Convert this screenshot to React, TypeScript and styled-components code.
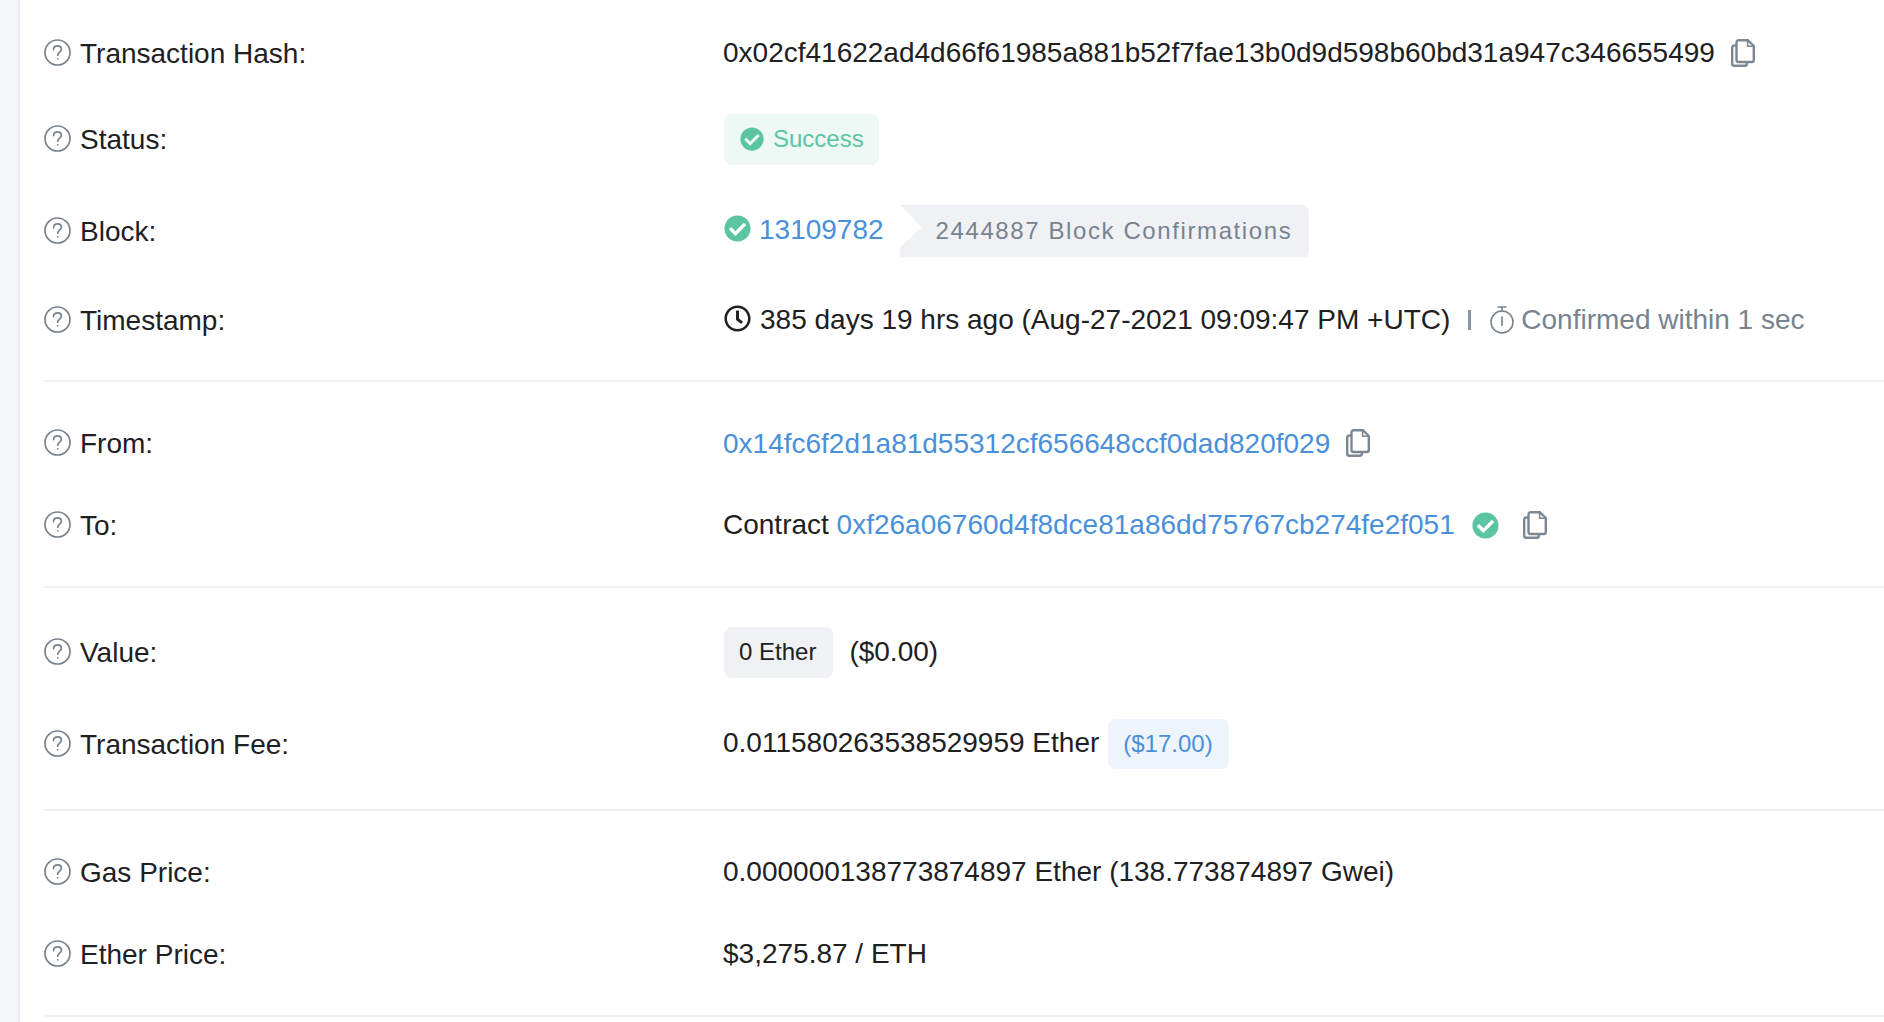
import * as React from 'react';
import styled, { createGlobalStyle } from 'styled-components';
import { FaCheckCircle, FaRegClock } from 'react-icons/fa';

const GlobalStyle = createGlobalStyle`
  html, body {
    margin: 0;
    padding: 0;
    background: #fff;
  }
  body {
    font-family: "Liberation Sans", Arial, sans-serif;
    font-size: 28px;
    color: #1e2022;
    -webkit-font-smoothing: antialiased;
  }
`;

const Page = styled.div`
  width: 1884px;
  height: 1022px;
  overflow: hidden;
  background: #f5f6f9;
  padding-left: 18px;
  box-sizing: border-box;
`;

const Card = styled.div`
  height: 100%;
  background: #fff;
  border-left: 2px solid #e7eaf3;
  padding-left: 24px;
`;

const Section = styled.section<{ $top: number; $bottom: number }>`
  padding: ${p => p.$top}px 0 ${p => p.$bottom}px;
  border-bottom: 2px solid #eef0f5;
`;

const Row = styled.div<{ $height: number }>`
  display: grid;
  grid-template-columns: 679px 1fr;
  align-items: center;
  height: ${p => p.$height}px;
`;

const Label = styled.div`
  display: flex;
  align-items: center;
  gap: 9px;

  svg {
    margin-bottom: 1px;
  }
`;

const LabelText = styled.span`
  padding-top: 2px;
`;

const Value = styled.div`
  display: flex;
  align-items: center;
  white-space: nowrap;
`;

const Link = styled.a<{ $lift?: number }>`
  color: #4a90d9;
  text-decoration: none;
  margin-bottom: ${p => p.$lift ?? 0}px;
`;

const SuccessBadge = styled.span`
  display: inline-flex;
  align-items: center;
  gap: 9px;
  height: 51px;
  margin-left: 1px;
  padding: 0 15px 0 16px;
  border-radius: 8px;
  background: #eef8f5;
  color: #5bc5a3;
  font-size: 24px;
`;

const Confirmations = styled.span`
  display: inline-flex;
  align-items: center;
  height: 53px;
  margin-left: 16px;
  padding: 0 17px 0 36px;
  border-radius: 0 6px 6px 0;
  background: #f0f1f4;
  color: #77838f;
  font-size: 24px;
  letter-spacing: 1.6px;
  clip-path: polygon(0 0, 100% 0, 100% 100%, 0 100%, 0 43px, 22px 23px);
`;

const Muted = styled.span`
  color: #77838f;
`;

const Separator = styled.span`
  width: 3px;
  height: 20px;
  margin: 0 19px 0 18px;
  background: #8b95a1;
`;

const EtherBadge = styled.span`
  display: inline-flex;
  align-items: center;
  height: 51px;
  margin: 0 16px 0 1px;
  padding: 0 17px 0 15px;
  border-radius: 8px;
  background: #f0f1f4;
  font-size: 24px;
`;

const FeeAmount = styled.span`
  margin-bottom: 2px;
`;

const FeeBadge = styled.span`
  display: inline-flex;
  align-items: center;
  height: 50px;
  padding: 0 16px 0 15px;
  margin-left: 9px;
  border-radius: 8px;
  background: #edf4fc;
  color: #4a90d9;
  font-size: 24px;
`;

const Green = styled.span<{ $size: number; $left?: number; $right?: number; $lift?: number }>`
  display: inline-flex;
  color: #5bc5a3;
  font-size: ${p => p.$size}px;
  margin-left: ${p => p.$left ?? 0}px;
  margin-right: ${p => p.$right ?? 0}px;
  margin-bottom: ${p => p.$lift ?? 0}px;
`;

const ClockWrap = styled.span`
  display: inline-flex;
  font-size: 27px;
  margin: 0 9px 3px 1px;
`;

const CopyButton = styled.span<{ $left: number }>`
  display: inline-flex;
  margin-left: ${p => p.$left}px;
  color: #7c8794;
`;

const StopwatchWrap = styled.span`
  display: inline-flex;
  margin-right: 7px;
`;

function HelpIcon() {
  return (
    <svg width="27" height="27" viewBox="0 0 27 27" fill="none" stroke="#77838f" strokeWidth="1.7">
      <circle cx="13.5" cy="13.5" r="12.5" />
      <path d="M9.6 10.6c0-2.3 1.7-3.7 3.9-3.7s3.9 1.4 3.9 3.4c0 2.7-3.7 2.9-3.7 5.9" strokeLinecap="round" />
      <circle cx="13.7" cy="19.8" r="0.9" fill="#77838f" stroke="none" />
    </svg>
  );
}

function CopyIcon() {
  return (
    <svg width="24" height="28" viewBox="0 0 24 28" fill="none" stroke="currentColor" strokeWidth="2.4" strokeLinejoin="round">
      <path d="M5.5 6.5H3.2A2 2 0 0 0 1.2 8.5v16.3a2 2 0 0 0 2 2h10.6a2 2 0 0 0 2-2V23" />
      <path d="M7.5 1.2h9.3l6 5.8v14a2 2 0 0 1-2 2H7.5a2 2 0 0 1-2-2V3.2a2 2 0 0 1 2-2z" />
      <path d="M16.6 1.4v5.8h6" strokeWidth="1.6" />
    </svg>
  );
}

function StopwatchIcon() {
  return (
    <svg width="24" height="28" viewBox="0 0 24 28" fill="none" stroke="#77838f" strokeWidth="1.6">
      <circle cx="12" cy="16" r="11" />
      <path d="M8 1h8M12 1v4M12 11v8.5" strokeLinecap="round" />
    </svg>
  );
}

type FieldProps = {
  label: string;
  height: number;
  children: React.ReactNode;
};

function Field({ label, height, children }: FieldProps) {
  return (
    <Row $height={height}>
      <Label>
        <HelpIcon />
        <LabelText>{label}</LabelText>
      </Label>
      <Value>{children}</Value>
    </Row>
  );
}

export default function App() {
  return (
    <Page>
      <GlobalStyle />
      <Card>
        <Section $top={12} $bottom={18}>
          <Field label="Transaction Hash:" height={82}>
            0x02cf41622ad4d66f61985a881b52f7fae13b0d9d598b60bd31a947c346655499
            <CopyButton $left={16}><CopyIcon /></CopyButton>
          </Field>
          <Field label="Status:" height={90}>
            <SuccessBadge>
              <Green $size={24}><FaCheckCircle /></Green>
              Success
            </SuccessBadge>
          </Field>
          <Field label="Block:" height={94}>
            <Green $size={27} $left={1} $right={8} $lift={5}><FaCheckCircle /></Green>
            <Link $lift={3}>13109782</Link>
            <Confirmations>2444887 Block Confirmations</Confirmations>
          </Field>
          <Field label="Timestamp:" height={84}>
            <ClockWrap><FaRegClock /></ClockWrap>
            385 days 19 hrs ago (Aug-27-2021 09:09:47 PM +UTC)
            <Separator />
            <StopwatchWrap><StopwatchIcon /></StopwatchWrap>
            <Muted>Confirmed within 1 sec</Muted>
          </Field>
        </Section>
        <Section $top={20} $bottom={20}>
          <Field label="From:" height={82}>
            <Link $lift={-2}>0x14fc6f2d1a81d55312cf656648ccf0dad820f029</Link>
            <CopyButton $left={16}><CopyIcon /></CopyButton>
          </Field>
          <Field label="To:" height={82}>
            Contract&nbsp;<Link>0xf26a06760d4f8dce81a86dd75767cb274fe2f051</Link>
            <Green $size={27} $left={17}><FaCheckCircle /></Green>
            <CopyButton $left={24}><CopyIcon /></CopyButton>
          </Field>
        </Section>
        <Section $top={18} $bottom={19}>
          <Field label="Value:" height={92}>
            <EtherBadge>0 Ether</EtherBadge>
            ($0.00)
          </Field>
          <Field label="Transaction Fee:" height={92}>
            <FeeAmount>0.011580263538529959 Ether</FeeAmount>
            <FeeBadge>($17.00)</FeeBadge>
          </Field>
        </Section>
        <Section $top={20} $bottom={20}>
          <Field label="Gas Price:" height={82}>
            0.000000138773874897 Ether (138.773874897 Gwei)
          </Field>
          <Field label="Ether Price:" height={82}>
            $3,275.87 / ETH
          </Field>
        </Section>
      </Card>
    </Page>
  );
}
